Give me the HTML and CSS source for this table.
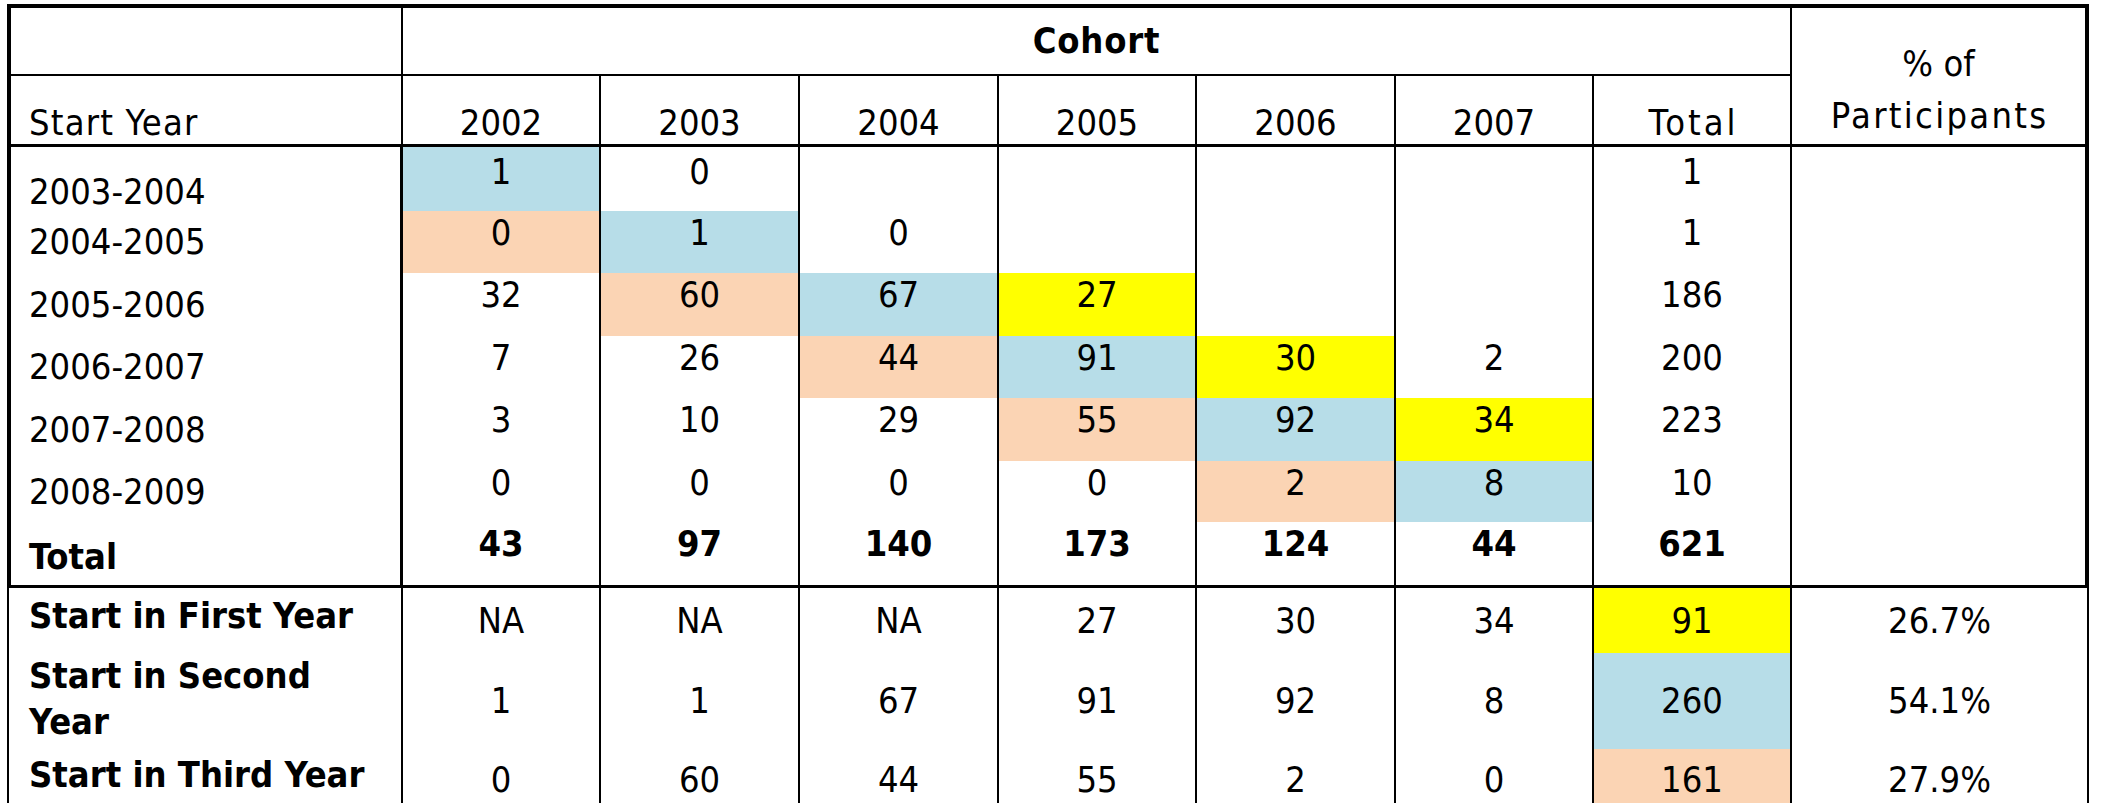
FILE: index.html
```html
<!DOCTYPE html>
<html lang="en">
<head>
<meta charset="utf-8">
<title>Participants by Cohort and Start Year</title>
<link rel="stylesheet" href="styles.css">
</head>
<body>
<table class="cohort-table">
  <colgroup>
    <col class="c-label">
    <col class="c-198"><col class="c-199"><col class="c-199"><col class="c-198"><col class="c-199"><col class="c-198"><col class="c-198">
    <col class="c-pct">
  </colgroup>
  <thead>
    <tr class="r-h1">
      <th class="lbl"></th>
      <th colspan="7" class="cohort">Cohort</th>
      <th rowspan="2" class="pct-head">% of<br><span class="wide">Participants</span></th>
    </tr>
    <tr class="r-h2">
      <th class="lbl">Start Year</th>
      <th>2002</th><th>2003</th><th>2004</th><th>2005</th><th>2006</th><th>2007</th><th class="tot-head">Total</th>
    </tr>
  </thead>
  <tbody class="data">
    <tr class="r-d1">
      <td class="lbl first">2003-2004</td>
      <td class="blue">1</td><td>0</td><td></td><td></td><td></td><td></td><td>1</td>
      <td rowspan="7" class="pct-blank"></td>
    </tr>
    <tr class="r-d2">
      <td class="lbl">2004-2005</td>
      <td class="peach">0</td><td class="blue">1</td><td>0</td><td></td><td></td><td></td><td>1</td>
    </tr>
    <tr class="r-d3">
      <td class="lbl">2005-2006</td>
      <td>32</td><td class="peach">60</td><td class="blue">67</td><td class="yellow">27</td><td></td><td></td><td>186</td>
    </tr>
    <tr class="r-d4">
      <td class="lbl">2006-2007</td>
      <td>7</td><td>26</td><td class="peach">44</td><td class="blue">91</td><td class="yellow">30</td><td>2</td><td>200</td>
    </tr>
    <tr class="r-d5">
      <td class="lbl">2007-2008</td>
      <td>3</td><td>10</td><td>29</td><td class="peach">55</td><td class="blue">92</td><td class="yellow">34</td><td>223</td>
    </tr>
    <tr class="r-d6">
      <td class="lbl">2008-2009</td>
      <td>0</td><td>0</td><td>0</td><td>0</td><td class="peach">2</td><td class="blue">8</td><td>10</td>
    </tr>
    <tr class="r-total">
      <td class="lbl">Total</td>
      <td>43</td><td>97</td><td>140</td><td>173</td><td>124</td><td>44</td><td>621</td>
    </tr>
  </tbody>
  <tbody class="summary">
    <tr class="r-s1">
      <td class="lbl">Start in First Year</td>
      <td>NA</td><td>NA</td><td>NA</td><td>27</td><td>30</td><td>34</td><td class="yellow">91</td><td class="pct">26.7%</td>
    </tr>
    <tr class="r-s2">
      <td class="lbl two">Start in Second Year</td>
      <td>1</td><td>1</td><td>67</td><td>91</td><td>92</td><td>8</td><td class="blue">260</td><td class="pct">54.1%</td>
    </tr>
    <tr class="r-s3">
      <td class="lbl">Start in Third Year</td>
      <td>0</td><td>60</td><td>44</td><td>55</td><td>2</td><td>0</td><td class="peach">161</td><td class="pct">27.9%</td>
    </tr>
  </tbody>
</table>
</body>
</html>
```
FILE: styles.css
```css
html, body {
  overflow: hidden;
  background: #ffffff;
}

body {
  margin: 4px 0 0 7px;
  font-family: "DejaVu Sans Condensed", "DejaVu Sans", sans-serif;
  font-stretch: condensed;
  font-size: 36px;
  line-height: 42px;
  color: #000000;
}

.cohort-table {
  table-layout: fixed;
  width: 2082px;
  border-collapse: separate;
  border-spacing: 0;
}

.c-label { width: 396px; }
.c-198 { width: 198px; }
.c-199 { width: 199px; }
.c-pct { width: 297px; }

th, td {
  padding: 0;
  text-align: center;
  font-weight: normal;
  border-right: 2px solid #000;
  white-space: nowrap;
}

.lbl {
  text-align: left;
  padding-left: 18px;
  border-left: 4px solid #000;
}

/* header */
.r-h1 { height: 72px; }
.r-h1 th {
  border-top: 4px solid #000;
  border-bottom: 2px solid #000;
  vertical-align: middle;
}
.cohort { font-weight: bold; letter-spacing: 0.8px; }

.r-h1 .pct-head {
  border-right-width: 4px;
  border-bottom: 3px solid #000;
  vertical-align: top;
  line-height: 52px;
  white-space: normal;
  padding-top: 30px;
}
.wide { letter-spacing: 2.3px; margin-right: -2.3px; }

.r-h2 { height: 71px; }
.r-h2 th {
  border-bottom: 3px solid #000;
  vertical-align: bottom;
}
.r-h2 .lbl { letter-spacing: 1.2px; }
.r-h2 .tot-head { letter-spacing: 3px; text-indent: 3px; }

/* data */
.r-d1 { height: 64px; }
.r-d2 { height: 62px; }
.r-d3 { height: 63px; }
.r-d4 { height: 62px; }
.r-d5 { height: 63px; }
.r-d6 { height: 61px; }
.r-total { height: 66px; }

.data td {
  vertical-align: top;
  padding-top: 1px;
}
.data .r-d1 td { padding-top: 4px; }
.data .lbl {
  vertical-align: middle;
  padding-top: 0;
  border-right-width: 3px;
}
.data .r-d1 .lbl.first {
  vertical-align: bottom;
  line-height: 30px;
  padding-top: 0;
  padding-bottom: 4px;
}

.r-total td {
  font-weight: bold;
  border-bottom: 3px solid #000;
}
.r-total .lbl { padding-top: 6px; }

.data .pct-blank {
  border-right-width: 4px;
  border-bottom: 3px solid #000;
}

/* summary */
.r-s1 { height: 65px; }
.r-s2 { height: 87px; }
.r-s3 { height: 63px; }

.summary td {
  vertical-align: middle;
}
.summary .lbl {
  font-weight: bold;
  border-left-width: 2px;
  padding-left: 20px;
  padding-bottom: 10px;
}
.summary .lbl.two {
  white-space: normal;
  line-height: 46px;
  padding-right: 40px;
  padding-bottom: 4px;
}
.r-s3 td { border-bottom: 2px solid #000; }
.summary .r-s3 .lbl { padding-bottom: 10px; }

/* fills */
.blue { background: #b7dde8; }
.peach { background: #fbd4b4; }
.yellow { background: #ffff00; }
```
